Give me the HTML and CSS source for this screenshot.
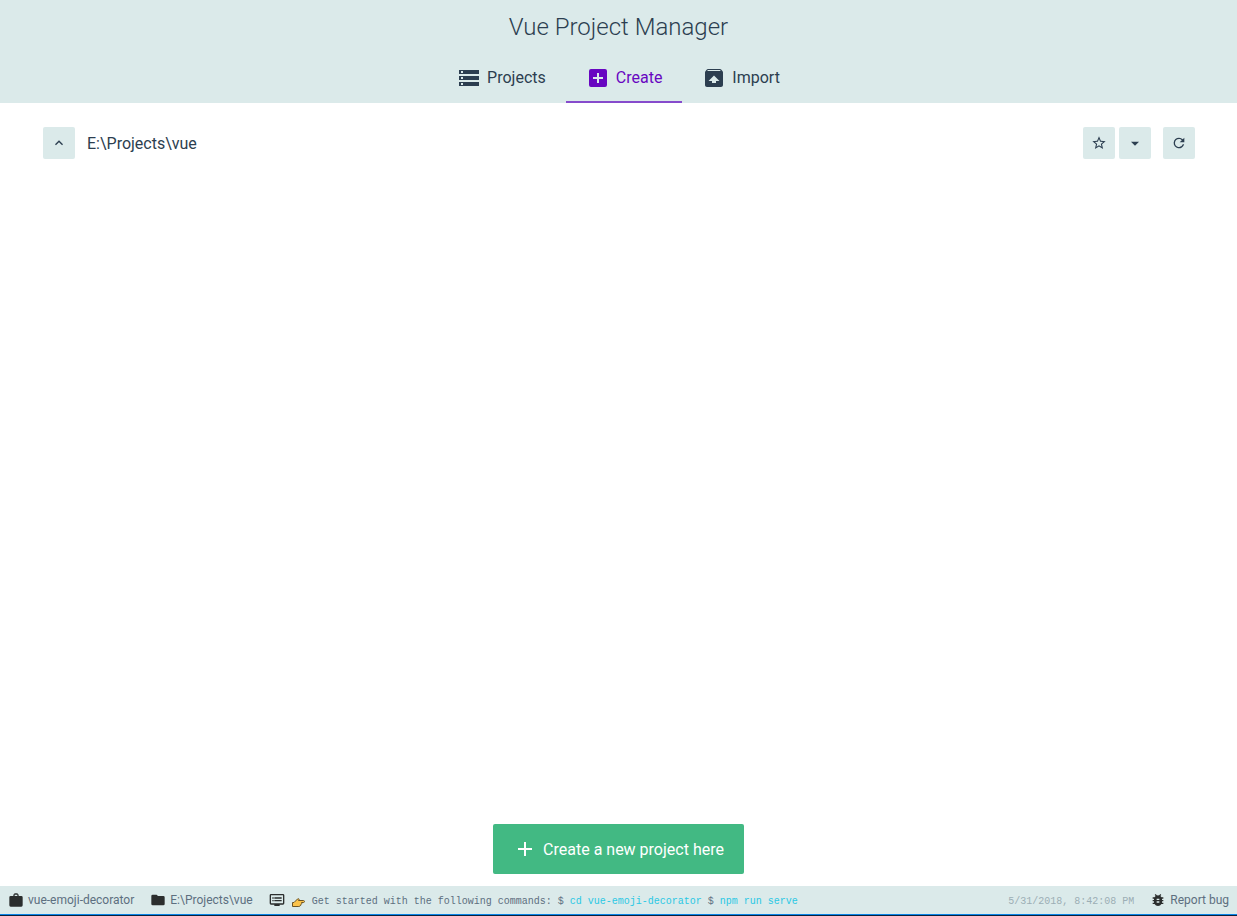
FILE: index.html
```html
<!DOCTYPE html>
<html lang="en">
<head>
<meta charset="utf-8">
<title>Vue Project Manager</title>
<link rel="stylesheet" href="styles.css">
</head>
<body>
<div class="app">
  <header class="header">
    <h1 class="title">Vue Project Manager</h1>
    <nav class="tabs">
      <a class="tab" href="#projects"><svg class="icon" viewBox="0 0 24 24"><path d="M2 20h20v-4H2v4zm2-3h2v2H4v-2zM2 4v4h20V4H2zm4 3H4V5h2v2zm-4 7h20v-4H2v4zm2-3h2v2H4v-2z"/></svg>Projects</a>
      <a class="tab active" href="#create" aria-current="page"><svg class="icon" viewBox="0 0 24 24"><path d="M19 3H5a2 2 0 0 0-2 2v14a2 2 0 0 0 2 2h14a2 2 0 0 0 2-2V5a2 2 0 0 0-2-2zm-2 10h-4v4h-2v-4H7v-2h4V7h2v4h4v2z"/></svg>Create</a>
      <a class="tab" href="#import"><svg class="icon" viewBox="0 0 24 24"><path d="M20.55 5.22l-1.39-1.68C18.88 3.21 18.47 3 18 3H6c-.47 0-.88.21-1.15.55L3.46 5.22C3.17 5.57 3 6.01 3 6.5V19c0 1.1.89 2 2 2h14c1.1 0 2-.9 2-2V6.5c0-.49-.17-.93-.45-1.28zM12 9.5l5.5 5.5H14v2h-4v-2H6.500L12 9.500zM5.120 5l.82-1h12l.93 1H5.120z"/></svg>Import</a>
    </nav>
  </header>
  <main class="content">
    <div class="toolbar">
      <button class="tool" type="button" aria-label="Parent folder"><svg class="small-icon" viewBox="0 0 24 24"><path d="M7.410 15.410L12 10.830l4.590 4.580L18 14l-6-6-6 6z"/></svg></button>
      <span class="path">E:\Projects\vue</span>
      <button class="tool" type="button" aria-label="Add to favorites"><svg class="small-icon" viewBox="0 0 24 24"><path d="M22 9.240l-7.190-.62L12 2 9.190 8.630 2 9.240l5.460 4.730L5.820 21 12 17.270 18.180 21l-1.630-7.030L22 9.240zM12 15.400l-3.760 2.270 1-4.280-3.320-2.880 4.380-.38L12 6.100l1.710 4.040 4.380.38-3.320 2.880 1 4.280L12 15.400z"/></svg></button>
      <button class="tool" type="button" aria-label="Favorite folders"><svg class="small-icon" viewBox="0 0 24 24"><path d="M6 10l6 6 6-6z"/></svg></button>
      <button class="tool refresh" type="button" aria-label="Refresh"><svg class="small-icon" viewBox="0 0 24 24"><path d="M17.650 6.350A7.960 7.960 0 0 0 12 4a8 8 0 1 0 7.730 10h-2.080A6 6 0 1 1 12 6c1.660 0 3.140.69 4.220 1.780L13 11h7V4l-2.350 2.350z"/></svg></button>
    </div>
    <div class="actions">
      <button class="create" type="button"><svg class="icon" viewBox="0 0 24 24"><path d="M19 13h-6v6h-2v-6H5v-2h6V5h2v6h6v2z"/></svg>Create a new project here</button>
    </div>
  </main>
  <footer class="status">
    <a class="item" href="#project"><svg class="status-icon" viewBox="0 0 24 24"><path d="M20 6h-4V4l-2-2h-4L8 4v2H4a2 2 0 0 0-2 2v12a2 2 0 0 0 2 2h16a2 2 0 0 0 2-2V8a2 2 0 0 0-2-2zm-6 0h-4V4h4v2z"/></svg>vue-emoji-decorator</a>
    <a class="item" href="#folder"><svg class="status-icon" viewBox="0 0 24 24"><path d="M10 4H4a2 2 0 0 0-2 2v12a2 2 0 0 0 2 2h16a2 2 0 0 0 2-2V8a2 2 0 0 0-2-2h-8l-2-2z"/></svg>E:\Projects\vue</a>
    <div class="item log">
      <svg class="status-icon" viewBox="0 0 24 24"><path d="M21 3H3a2 2 0 0 0-2 2v12a2 2 0 0 0 2 2h5v2h8v-2h5a2 2 0 0 0 2-2V5a2 2 0 0 0-2-2zm0 14H3V5h18v12zM19 8H8v2h11V8zm0 4H8v2h11v-2zM7 8H5v2h2V8zm0 4H5v2h2v-2z"/></svg>
      <svg class="hand" viewBox="0 0 13 10"><path d="M.5 5.500H2L5.500 2c1-.8 2 0 1.500 1l-.5.500H11.500c1.300 0 1.300 2 0 2H9.500c.5 1 .2 1.500-.5 1.700 0 1-.3 1.500-1 1.500 0 .6-.5.800-1.200.800H.5z"/></svg>
      <span class="message">Get started with the following commands: $ <span class="command">cd vue-emoji-decorator</span> $ <span class="command">npm run serve</span></span>
      <time class="date">5/31/2018, 8:42:08 PM</time>
    </div>
    <a class="item" href="#bug"><svg class="status-icon" viewBox="0 0 24 24"><path d="M20 8h-2.810a5.900 5.900 0 0 0-1.820-1.960L17 4.410 15.590 3l-2.170 2.170a6 6 0 0 0-2.830 0L8.410 3 7 4.410l1.620 1.630A6 6 0 0 0 6.810 8H4v2h2.090L6 11v1H4v2h2v1l.09 1H4v2h2.810a6 6 0 0 0 10.380 0H20v-2h-2.090l.09-1v-1h2v-2h-2v-1l-.09-1H20V8zm-6 8h-4v-2h4v2zm0-4h-4v-2h4v2z"/></svg>Report bug</a>
  </footer>
</div>
</body>
</html>
```
FILE: styles.css
```css
* { box-sizing: border-box; }
body {
  margin: 0;
  font-family: Roboto, "Liberation Sans", sans-serif;
  font-size: 16px;
  color: #2c3e50;
  background: #fff;
}
a { color: inherit; text-decoration: none; }
button { border: 0; padding: 0; font: inherit; color: inherit; cursor: pointer; }
svg { fill: currentColor; flex: none; }
.app { min-height: 100vh; display: flex; flex-direction: column; }
.header { background: #dbeaea; text-align: center; }
.title { margin: 0; padding: 11px 0 8px; font-size: 24px; line-height: 33px; font-weight: 300; }
.tabs { display: flex; justify-content: center; }
.tab {
  display: flex;
  align-items: center;
  gap: 6px;
  height: 51px;
  padding: 2px 20px 0;
  border-bottom: 2px solid transparent;
}
.tab.active { color: #6806c1; border-bottom-color: #864bcc; }
.icon { width: 24px; height: 24px; }
.content { flex: 1; display: flex; flex-direction: column; justify-content: space-between; }
.toolbar { display: flex; align-items: center; gap: 4px; padding: 24px 42px 0 43px; }
.tool {
  display: flex;
  align-items: center;
  justify-content: center;
  width: 32px;
  height: 32px;
  border-radius: 2px;
  background: #dbeaea;
}
.refresh { margin-left: 8px; }
.small-icon { width: 16px; height: 16px; }
.path { flex: 1; padding-left: 8px; }
.actions { display: flex; justify-content: center; padding: 12px; }
.create {
  display: flex;
  align-items: center;
  gap: 6px;
  height: 50px;
  padding: 0 20px;
  border-radius: 2px;
  background: #42b983;
  color: #fff;
}
.status {
  display: flex;
  height: 30px;
  background: #dbeaea;
  border-bottom: 1px solid #07213d;
  box-shadow: inset 0 -1px #0a84e8;
  font-size: 12px;
  color: #5d6f80;
}
.item { display: flex; align-items: center; gap: 4px; padding: 0 8px 2px; white-space: nowrap; }
.status-icon { width: 16px; height: 16px; color: #2b2e2e; }
.log { flex: 1; gap: 7px; font-family: "Liberation Mono", monospace; font-size: 10px; }
.hand { width: 13px; height: 10px; fill: #fbc34b; stroke: #6b5426; stroke-width: 1; margin-top: 5px; }
.message, .date { padding-top: 4px; }
.command { color: #2ac8e4; }
.date { margin-left: auto; color: #9caeb5; }
```
